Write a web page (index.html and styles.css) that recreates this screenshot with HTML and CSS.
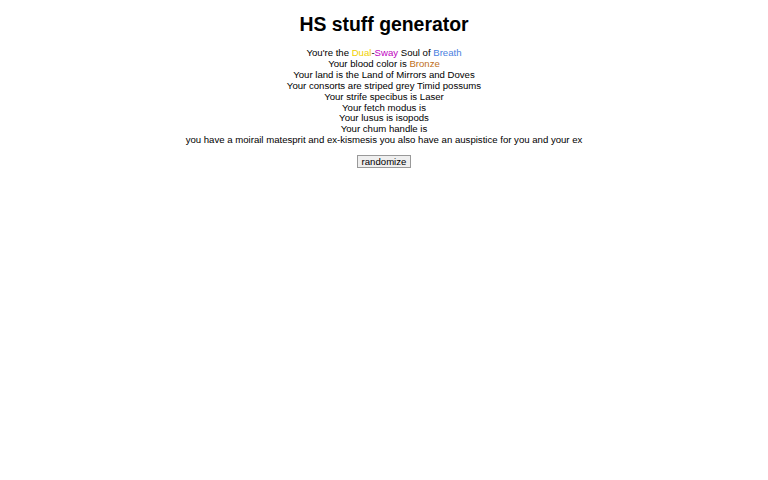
FILE: index.html
```html
<!DOCTYPE html>
<html lang="en">
<head>
    <meta charset="UTF-8">
    <title>HS stuff generator</title>
    <link rel="stylesheet" href="styles.css">
</head>
<body>
    <h1>HS stuff generator</h1>
    <div id="output">
        <div>You're the <span class="dual">Dual</span>-<span class="sway">Sway</span> Soul of <span class="breath">Breath</span></div>
        <div>Your blood color is <span class="bronze">Bronze</span></div>
        <div>Your land is the Land of Mirrors and Doves</div>
        <div>Your consorts are striped grey Timid possums</div>
        <div>Your strife specibus is Laser</div>
        <div>Your fetch modus is </div>
        <div>Your lusus is isopods</div>
        <div>Your chum handle is </div>
        <div>you have a moirail matesprit and ex-kismesis you also have an auspistice for you and your ex</div>
    </div>
    <button class="btn">randomize</button>
</body>
</html>
```

FILE: styles.css
```css
body {
    font-family: "Liberation Sans", Arial, sans-serif;
    margin: 0;
    padding: 8px;
    text-align: center;
    color: #000;
}
h1 {
    font-size: 19.4px;
    margin: 5px 0 13px;
    line-height: 22px;
}
#output {
    font-size: 9.6px;
    line-height: 10.9px;
}
.dual { color: #f0d000; }
.sway { color: #c000c0; }
.breath { color: #4a80e0; }
.bronze { color: #c07020; }
.btn {
    font-family: "Liberation Sans", Arial, sans-serif;
    font-size: 9.6px;
    margin-top: 9px;
    padding: 0 4px;
    line-height: 10px;
    height: 13px;
    background: #efefef;
    border: 1px solid #999;
    border-radius: 0;
}
```
